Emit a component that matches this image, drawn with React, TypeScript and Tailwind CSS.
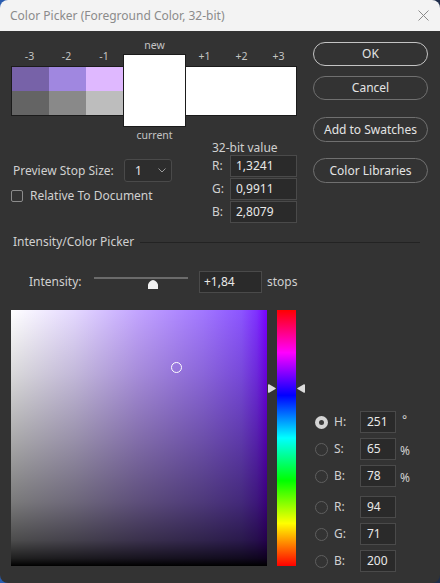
import React from "react";

function Radio({ checked }: { checked?: boolean }) {
  return checked ? (
    <div className="w-[13px] h-[13px] rounded-full bg-[#d4d4d4] flex items-center justify-center shrink-0">
      <div className="w-[5px] h-[5px] rounded-full bg-[#3a3a3a]" />
    </div>
  ) : (
    <div className="w-[13px] h-[13px] rounded-full border-[1.5px] border-[#5f5f5f] shrink-0" />
  );
}

function ValRow({ label, value, unit, unitClass }: { label: string; value: string; unit?: string; unitClass?: string }) {
  return (
    <div className="flex items-center h-[22px]">
      <Radio checked={label === "H:"} />
      <span className="ml-[6px] w-[26px] text-[#d0d0d0]">{label}</span>
      <div className="w-[36px] h-[22px] border border-[#4a4a4a] bg-[#2a2a2a] flex items-center pl-[6px] text-[#e8e8e8]">{value}</div>
      {unit ? <span className={unitClass}>{unit}</span> : null}
    </div>
  );
}

function Btn({ children, primary, tall }: { children: React.ReactNode; primary?: boolean; tall?: boolean }) {
  return (
    <div
      className={
        (tall ? "h-[25px] " : "h-[24px] ") +
        (primary ? "border-[1.5px] border-[#c4c4c4] " : "border-[1.5px] border-[#707070] ") +
        "rounded-full flex items-center justify-center text-[12px] text-[#e4e4e4]"
      }
    >
      {children}
    </div>
  );
}

export default function App() {
  return (
    <div className="w-[440px] h-[583px] bg-[linear-gradient(to_right,#2a5db0,#1f2d4a)] font-['Noto_Sans',sans-serif] text-[12px] text-[#d0d0d0] leading-none">
      <div className="flex flex-col h-full rounded-[8px] overflow-hidden">
        <div className="h-[31px] shrink-0 bg-[#f3f3f3] flex items-center justify-between pl-[10px] pr-[11px]">
          <span className="text-[12px] text-[#8b8b8b]">Color Picker (Foreground Color, 32-bit)</span>
          <svg width="11" height="11" viewBox="0 0 11 11">
            <path d="M0.5 0.5L10.5 10.5M10.5 0.5L0.5 10.5" stroke="#8a8a8a" strokeWidth="1" />
          </svg>
        </div>
        <div className="flex-1 bg-[#333333] flex flex-col">
          {/* top section */}
          <div className="flex">
            <div className="ml-[11px] w-[286px] flex flex-col">
              <div className="flex items-start pt-[9px]">
                <div className="w-[112px] mt-[11px]">
                  <div className="h-[15px] flex text-[10.5px] text-[#c4c4c4]">
                    <span className="w-[37px] text-center">-3</span>
                    <span className="w-[37px] text-center">-2</span>
                    <span className="w-[38px] text-center">-1</span>
                  </div>
                  <div className="h-[50px] border border-r-0 border-[#1b1b1b] grid grid-cols-3 grid-rows-2">
                    <div className="bg-[#7762a8]" />
                    <div className="bg-[#a087e0]" />
                    <div className="bg-[#dfb8ff]" />
                    <div className="bg-[#646464]" />
                    <div className="bg-[#898989]" />
                    <div className="bg-[#bdbdbd]" />
                  </div>
                </div>
                <div className="w-[63px] flex flex-col">
                  <div className="h-[14px] text-center text-[10.5px] text-[#c4c4c4]">new</div>
                  <div className="h-[73px] border border-[#1b1b1b] bg-white" />
                  <div className="h-[15px] pt-[3px] text-center text-[10.5px] text-[#c4c4c4]">current</div>
                </div>
                <div className="w-[111px] mt-[11px]">
                  <div className="h-[15px] flex text-[10.5px] text-[#c4c4c4]">
                    <span className="w-[37px] text-center">+1</span>
                    <span className="w-[37px] text-center">+2</span>
                    <span className="w-[37px] text-center">+3</span>
                  </div>
                  <div className="h-[50px] border border-l-0 border-[#1b1b1b] bg-white" />
                </div>
              </div>
              <div className="flex">
                <div className="w-[201px] pt-[17px]">
                  <div className="flex items-center h-[23px]">
                    <span className="ml-[2px] w-[111px]">Preview Stop Size:</span>
                    <div className="w-[48px] h-[23px] border border-[#4a4a4a] rounded-[3px] bg-[#2d2d2d] flex items-center justify-between pl-[10px] pr-[5px]">
                      <span className="text-[#e8e8e8]">1</span>
                      <svg width="8" height="5" viewBox="0 0 8 5">
                        <path d="M0.5 0.5L4 4L7.5 0.5" fill="none" stroke="#9a9a9a" strokeWidth="1" />
                      </svg>
                    </div>
                  </div>
                  <div className="flex items-center h-[12px] mt-[8px]">
                    <div className="w-[12px] h-[12px] border border-[#8c8c8c] rounded-[2px]" />
                    <span className="ml-[7px]">Relative To Document</span>
                  </div>
                </div>
                <div className="w-[85px] flex flex-col">
                  <div className="h-[13px]">32-bit value</div>
                  <div className="flex flex-col gap-[1px]">
                    {[
                      ["R:", "1,3241"],
                      ["G:", "0,9911"],
                      ["B:", "2,8079"],
                    ].map(([l, v]) => (
                      <div key={l} className="flex items-center h-[22px]">
                        <span className="w-[18px]">{l}</span>
                        <div className="w-[67px] h-[22px] border border-[#4a4a4a] bg-[#2a2a2a] flex items-center pl-[5px] text-[#e8e8e8]">{v}</div>
                      </div>
                    ))}
                  </div>
                </div>
              </div>
            </div>
            <div className="ml-[16px] w-[115px] pt-[11px] flex flex-col">
              <Btn primary>OK</Btn>
              <div className="mt-[10px]"><Btn>Cancel</Btn></div>
              <div className="mt-[17px]"><Btn tall>Add to Swatches</Btn></div>
              <div className="mt-[16px]"><Btn tall>Color Libraries</Btn></div>
            </div>
          </div>

          {/* heading */}
          <div className="mt-[12px] h-[14px] flex items-center">
            <span className="ml-[13px]">Intensity/Color Picker</span>
            <div className="flex-1 h-[1px] bg-[#232323] ml-[6px] mr-[20px]" />
          </div>

          {/* intensity */}
          <div className="mt-[22px] h-[22px] flex items-center pl-[29px]">
            <span className="w-[65px]">Intensity:</span>
            <div className="w-[94px] h-[22px] relative">
              <div className="absolute left-0 right-0 top-[6px] h-[2px] bg-[#6b6b6b]" />
              <svg className="absolute left-[54px] top-[9px]" width="10" height="9" viewBox="0 0 10 9">
                <path d="M0 9V5C0 3 3 0 5 0C7 0 10 3 10 5V9Z" fill="#f2f2f2" />
              </svg>
            </div>
            <div className="ml-[11px] w-[63px] h-[22px] border border-[#4a4a4a] bg-[#2a2a2a] flex items-center pl-[4px] text-[#e8e8e8]">+1,84</div>
            <span className="ml-[5px]">stops</span>
          </div>

          {/* bottom */}
          <div className="mt-[17px] flex pl-[11px]">
            <div className="w-[256px] h-[256px] relative bg-[linear-gradient(to_bottom,rgba(0,0,0,0)_0%,rgba(0,0,0,0.15)_25%,rgba(0,0,0,0.33)_50%,rgba(0,0,0,0.52)_75%,rgba(0,0,0,0.7)_90%,rgba(0,0,0,0.88)_97%,#000_100%),linear-gradient(to_right,#ffffff_0%,#e4d8ff_25%,#c2a3ff_50%,#a277ff_75%,#8c55ff_90%,#7f30ff_96%,#7800ff_100%)]">
              <div className="absolute left-[160px] top-[52px] w-[11px] h-[11px] rounded-full border border-white" />
            </div>
            <div className="ml-[10px] w-[19px] h-[256px] relative bg-[linear-gradient(to_bottom,#ff0000_0%,#ff00ff_16.67%,#0000ff_33.33%,#00ffff_50%,#00ff00_66.67%,#ffff00_83.33%,#ff0000_100%)]">
              <svg className="absolute left-[-9px] top-[74px]" width="8" height="9" viewBox="0 0 8 9">
                <path d="M0 1V8C0 9 1 9 1.5 8.6L7.5 5C8 4.7 8 4.3 7.5 4L1.5 0.4C1 0 0 0 0 1Z" fill="#dcdcdc" />
              </svg>
              <svg className="absolute left-[20px] top-[74px]" width="8" height="9" viewBox="0 0 8 9">
                <path d="M8 1V8C8 9 7 9 6.5 8.6L0.5 5C0 4.7 0 4.3 0.5 4L6.5 0.4C7 0 8 0 8 1Z" fill="#dcdcdc" />
              </svg>
            </div>
            <div className="ml-[19px] pt-[101px] flex flex-col">
              <ValRow label="H:" value="251" unit="°" unitClass="ml-[6px] -mt-[4px]" />
              <div className="mt-[5px]"><ValRow label="S:" value="65" unit="%" unitClass="ml-[4px] mt-[3px]" /></div>
              <div className="mt-[5px]"><ValRow label="B:" value="78" unit="%" unitClass="ml-[4px] mt-[3px]" /></div>
              <div className="mt-[9px]"><ValRow label="R:" value="94" /></div>
              <div className="mt-[5px]"><ValRow label="G:" value="71" /></div>
              <div className="mt-[5px]"><ValRow label="B:" value="200" /></div>
            </div>
          </div>
        </div>
      </div>
    </div>
  );
}
